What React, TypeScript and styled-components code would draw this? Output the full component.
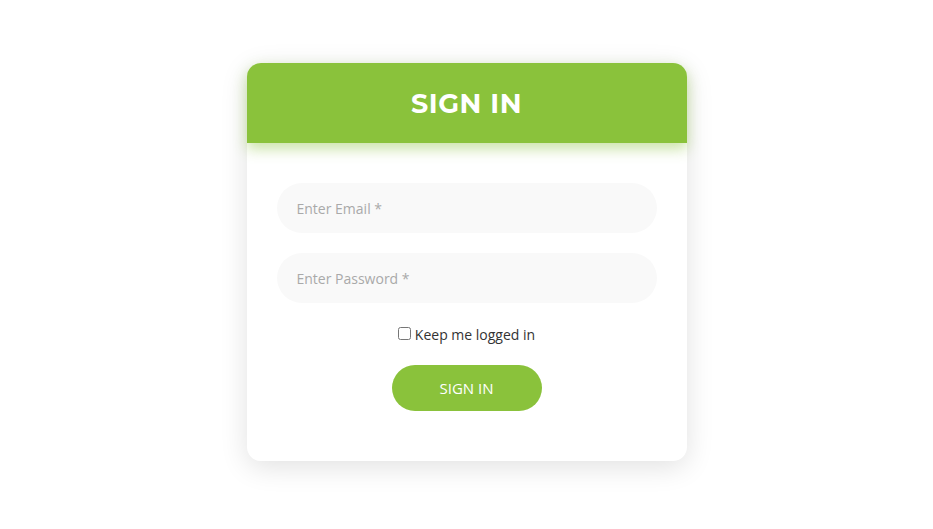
import React from "react";
import styled, { createGlobalStyle } from "styled-components";

const Global = createGlobalStyle`
  html, body { margin: 0; padding: 0; background: #fff; }
  body { font-family: "Open Sans", "Liberation Sans", sans-serif; }
  * { box-sizing: border-box; }
`;

const Page = styled.div`
  width: 933px;
  min-height: 529px;
  display: flex;
  justify-content: center;
  padding-top: 63px;
`;

const Card = styled.div`
  width: 440px;
  height: 398px;
  border-radius: 14px;
  background: #fff;
  box-shadow: 0 6px 28px rgba(0, 0, 0, 0.12);
  display: flex;
  flex-direction: column;
`;

const Header = styled.div`
  height: 80px;
  background: #8ac23b;
  border-radius: 14px 14px 0 0;
  box-shadow: 0 6px 14px rgba(138, 194, 59, 0.45);
  display: flex;
  align-items: center;
  justify-content: center;
  position: relative;
  z-index: 1;
`;

const Title = styled.h1`
  margin: 0;
  color: #fff;
  font-family: "Montserrat", "Open Sans", sans-serif;
  font-weight: 700;
  font-size: 27px;
  letter-spacing: 0.6px;
`;

const Body = styled.form`
  padding: 40px 30px 50px;
  display: flex;
  flex-direction: column;
  align-items: center;
`;

const Input = styled.input`
  width: 380px;
  height: 50px;
  border: none;
  outline: none;
  border-radius: 25px;
  background: #f9f9f9;
  padding: 0 20px;
  font-family: "Open Sans", sans-serif;
  font-size: 14px;
  color: #333;
  margin-bottom: 20px;
  &::placeholder { color: #a9a9a9; }
`;

const CheckRow = styled.label`
  display: flex;
  align-items: center;
  gap: 4px;
  height: 20px;
  margin-top: 1px;
  font-size: 14px;
  color: #333;
  cursor: pointer;
`;

const Check = styled.input`
  width: 13px;
  height: 13px;
  margin: 0 0 2px 0;
`;

const Button = styled.button`
  margin-top: 21px;
  width: 150px;
  height: 46px;
  border: none;
  border-radius: 23px;
  background: #8ac23b;
  color: #fff;
  font-family: "Open Sans", sans-serif;
  font-size: 15px;
  cursor: pointer;
`;

export default function App() {
  return (
    <>
      <Global />
      <Page>
        <Card>
          <Header>
            <Title>SIGN IN</Title>
          </Header>
          <Body onSubmit={(e) => e.preventDefault()}>
            <Input type="email" placeholder="Enter Email *" />
            <Input type="password" placeholder="Enter Password *" />
            <CheckRow>
              <Check type="checkbox" />
              Keep me logged in
            </CheckRow>
            <Button type="submit">SIGN IN</Button>
          </Body>
        </Card>
      </Page>
    </>
  );
}
